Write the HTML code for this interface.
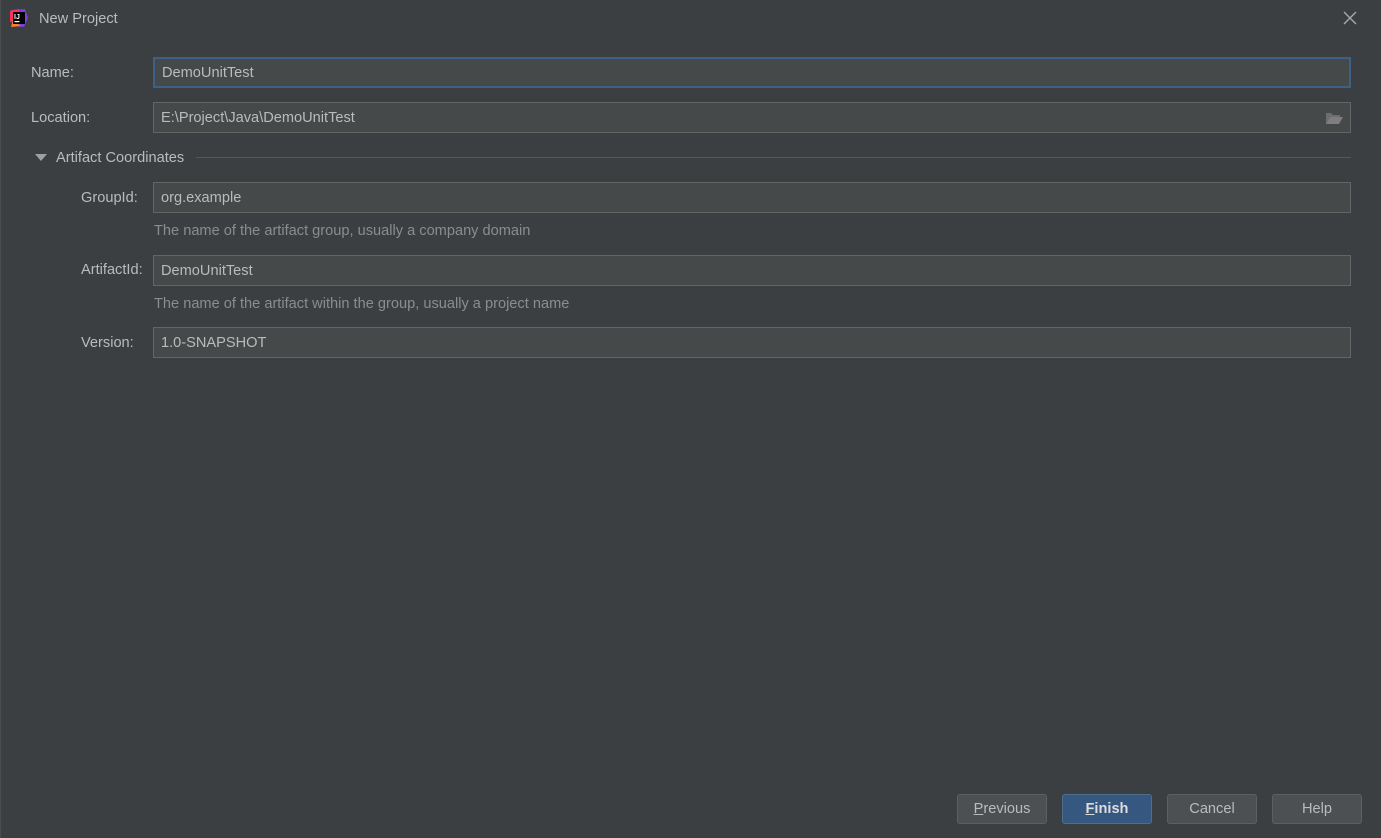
<!DOCTYPE html>
<html><head><style>
body{margin:0;width:1381px;height:838px;background:#3c3f41;font-family:"Liberation Sans",sans-serif;font-size:14.6px;color:#bbbbbb;position:relative;overflow:hidden}
.a{position:absolute}
.f{position:absolute;left:153px;background:#45494a;border:1px solid #646464;line-height:30px;padding-left:7px;box-sizing:border-box;width:1198px;height:31px}
.l{position:absolute;line-height:17px}
.h{position:absolute;left:154px;color:#8a8d8f;line-height:17px}
.b{position:absolute;top:794px;width:90px;height:30px;box-sizing:border-box;background:#4c5052;border:1px solid #5e6060;border-radius:3px;text-align:center;line-height:29px;color:#bbbbbb}
</style></head><body>
<div class="a" style="left:0;top:0;width:1px;height:838px;background:#4a4d50"></div>
<svg class="a" style="left:9px;top:8px" width="20" height="20" viewBox="0 0 20 20">
<path d="M2 2 L16 1 L19 10 L15 19 L3 18 Z" fill="#7b3fe4"/><path d="M1 3 L10 1 L8 12 L1 14Z" fill="#fe315d"/><path d="M4 12 L12 18 L2 19Z" fill="#fc801d"/>
<rect x="4" y="4" width="12" height="12" fill="#000"/><rect x="5.5" y="13" width="5" height="1.2" fill="#fff"/>
<text x="5" y="11" font-size="7" font-weight="bold" fill="#fff" font-family="Liberation Sans">IJ</text></svg>
<div class="l" style="left:39px;top:11px">New Project</div>
<svg class="a" style="left:1343px;top:11px" width="14" height="14"><path d="M1 1L13 13M13 1L1 13" stroke="#aaa" stroke-width="1.3"/></svg>
<div class="l" style="left:31px;top:65px">Name:</div>
<div class="f" style="top:57px;border:2px solid #3d6185;padding-left:7px;line-height:28px">DemoUnitTest</div>
<div class="l" style="left:31px;top:110px">Location:</div>
<div class="f" style="top:102px">E:\Project\Java\DemoUnitTest</div>
<svg class="a" style="left:1325px;top:111px" width="18" height="14"><path d="M1 2h5l2 2h7v2H5L1 13Z" fill="#6e6e6e"/><path d="M5 6h13l-4 7H1Z" fill="#7e7e7e"/></svg>
<svg class="a" style="left:35px;top:154px" width="12" height="8"><path d="M0 0h12L6 7Z" fill="#a0a0a0"/></svg>
<div class="l" style="left:56px;top:150px">Artifact Coordinates</div>
<div class="a" style="left:196px;top:157px;width:1155px;height:1px;background:#555759"></div>
<div class="l" style="left:81px;top:190px">GroupId:</div>
<div class="f" style="top:182px">org.example</div>
<div class="h" style="top:223px">The name of the artifact group, usually a company domain</div>
<div class="l" style="left:81px;top:262px">ArtifactId:</div>
<div class="f" style="top:255px">DemoUnitTest</div>
<div class="h" style="top:296px">The name of the artifact within the group, usually a project name</div>
<div class="l" style="left:81px;top:335px">Version:</div>
<div class="f" style="top:327px">1.0-SNAPSHOT</div>
<div class="b" style="left:957px"><u>P</u>revious</div>
<div class="b" style="left:1062px;background:#365880;border-color:#4c708c;font-weight:bold;color:#dddddd"><u>F</u>inish</div>
<div class="b" style="left:1167px">Cancel</div>
<div class="b" style="left:1272px">Help</div>
</body></html>
